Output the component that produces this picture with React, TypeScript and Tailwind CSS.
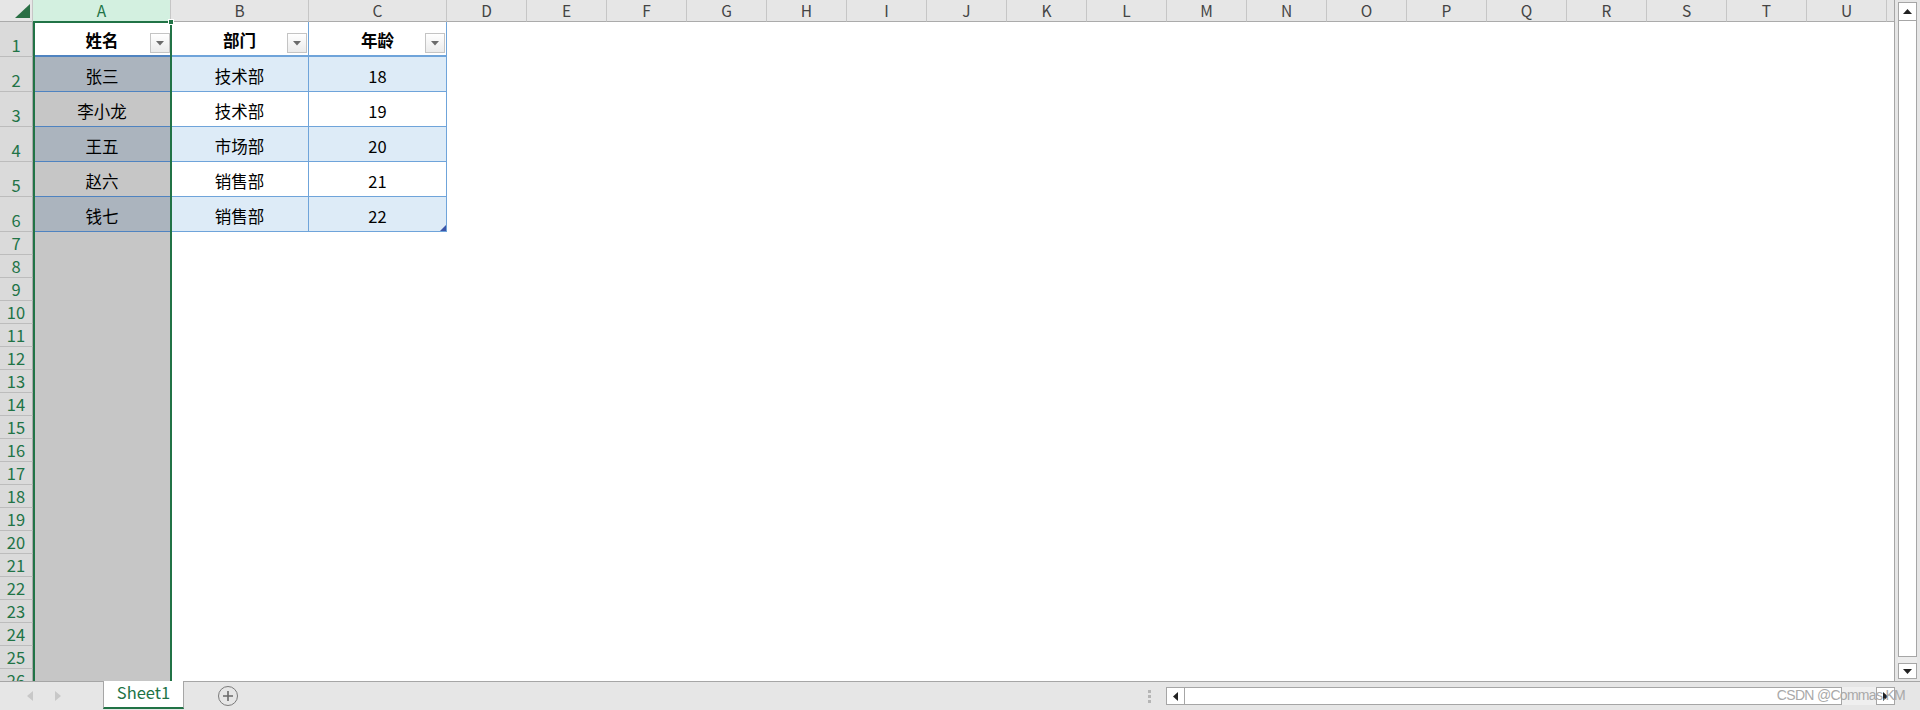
import React from "react";

const rows = [
  ["姓名", "部门", "年龄"],
  ["张三", "技术部", "18"],
  ["李小龙", "技术部", "19"],
  ["王五", "市场部", "20"],
  ["赵六", "销售部", "21"],
  ["钱七", "销售部", "22"],
];

const moreCols = ["D", "E", "F", "G", "H", "I", "J", "K", "L", "M", "N", "O", "P", "Q", "R", "S", "T", "U"];

const font = { fontFamily: '"Noto Sans CJK SC", "Liberation Sans", sans-serif' };

function FilterButton() {
  return (
    <div className="absolute right-[1px] bottom-[2px] w-[20px] h-[20px] border border-[#c4c4c4] bg-gradient-to-b from-white to-[#ebebeb] flex items-center justify-center">
      <svg width="8" height="5" viewBox="0 0 8 5">
        <path d="M0 0 L8 0 L4 4.5 Z" fill="#6b6b6b" />
      </svg>
    </div>
  );
}

function RowHeader({ n, h }: { n: number; h: string }) {
  return (
    <div
      className={`w-[33px] shrink-0 ${h} bg-[#dadada] border-r border-b border-r-[#a8a8a8] border-b-[#bcbcbc] flex items-end justify-center text-[16.5px] leading-[20px] text-[#217346] pb-[1px]`}
    >
      {n}
    </div>
  );
}

export default function App() {
  return (
    <div className="w-[1920px] h-[710px] bg-[#e6e6e6] flex flex-col overflow-hidden text-black" style={font}>
      <div className="flex h-[681px]">
        {/* sheet grid */}
        <div className="relative w-[1895px] h-[681px] overflow-hidden bg-white border-r border-[#a6a6a6] flex flex-col">
          {/* column headers */}
          <div className="flex h-[22px] shrink-0 bg-[#e6e6e6] text-[15.5px] text-[#444]">
            <div className="w-[33px] shrink-0 border-r border-b border-r-[#c6c6c6] border-b-[#ababab] flex items-end justify-end pr-[2px] pb-[3px]">
              <svg width="15" height="14" viewBox="0 0 15 14">
                <path d="M15 0 L15 14 L0 14 Z" fill="#2a6f45" />
              </svg>
            </div>
            <div className="w-[138px] shrink-0 bg-[#d3f0e0] text-[#217346] border-r border-b border-r-[#c6c6c6] border-b-[#217346] flex items-center justify-center pt-[1px]">
              A
            </div>
            {["B", "C"].map((c) => (
              <div key={c} className="w-[138px] shrink-0 border-r border-b border-r-[#c6c6c6] border-b-[#ababab] flex items-center justify-center pt-[1px]">
                {c}
              </div>
            ))}
            {moreCols.map((c) => (
              <div key={c} className="w-[80px] shrink-0 border-r border-b border-r-[#c6c6c6] border-b-[#ababab] flex items-center justify-center pt-[1px]">
                {c}
              </div>
            ))}
            <div className="flex-1 border-b border-b-[#ababab]" />
          </div>

          {/* table rows */}
          {rows.map((r, i) => {
            const head = i === 0;
            const band = i % 2 === 1;
            const last = i === rows.length - 1;
            const bottom = head ? "border-b-2" : "border-b";
            const aBg = head ? "bg-white" : band ? "bg-[#abb4be]" : "bg-[#c6c6c6]";
            const bcBg = head ? "bg-white" : band ? "bg-[#ddebf7]" : "bg-white";
            const weight = head ? "font-bold" : "";
            return (
              <div key={i} className="flex h-[35px] shrink-0">
                <RowHeader n={i + 1} h="h-[35px]" />
                <div className={`relative w-[138px] shrink-0 ${aBg} ${bottom} border-[#4f83c0] flex items-end justify-center pb-[5px] text-[16.5px] leading-[20px] ${weight}`}>
                  {r[0]}
                  {head && <FilterButton />}
                </div>
                <div className={`relative w-[138px] shrink-0 ${bcBg} ${bottom} border-r border-[#6fa4da] flex items-end justify-center pb-[5px] text-[16.5px] leading-[20px] ${weight}`}>
                  {r[1]}
                  {head && <FilterButton />}
                </div>
                <div className={`relative w-[138px] shrink-0 ${bcBg} ${bottom} border-r border-[#6fa4da] flex items-end justify-center pb-[5px] text-[16.5px] leading-[20px] ${weight}`}>
                  {r[2]}
                  {head && <FilterButton />}
                  {last && (
                    <svg className="absolute right-0 bottom-0" width="6" height="6" viewBox="0 0 6 6">
                      <path d="M6 0 L6 6 L0 6 Z" fill="#3b55a8" />
                    </svg>
                  )}
                </div>
                <div className="flex-1" />
              </div>
            );
          })}

          {/* empty rows */}
          {Array.from({ length: 20 }, (_, k) => k + 7).map((n) => (
            <div key={n} className="flex h-[23px] shrink-0">
              <RowHeader n={n} h="h-[23px]" />
              <div className="w-[138px] shrink-0 bg-[#c6c6c6]" />
              <div className="flex-1" />
            </div>
          ))}

          {/* column A selection outline */}
          <div className="absolute left-[33px] top-[21px] w-[139px] h-[700px] border-2 border-[#217346]" />
          <div className="absolute left-[168px] top-[19px] w-[6px] h-[6px] bg-[#217346] border border-white" />
        </div>

        {/* vertical scrollbar */}
        <div className="w-[25px] flex flex-col pl-[3px] pr-[3px] pt-[2px] pb-[2px]">
          <div className="h-[19px] bg-white border border-[#a6a6a6] flex items-center justify-center">
            <svg width="9" height="5" viewBox="0 0 9 5">
              <path d="M4.5 0 L9 5 L0 5 Z" fill="#222" />
            </svg>
          </div>
          <div className="h-[636px] bg-white border border-t-0 border-[#a6a6a6]" />
          <div className="flex-1 bg-[#ececec]" />
          <div className="h-[16px] bg-white border border-[#a6a6a6] flex items-center justify-center">
            <svg width="9" height="5" viewBox="0 0 9 5">
              <path d="M0 0 L9 0 L4.5 5 Z" fill="#222" />
            </svg>
          </div>
        </div>
      </div>

      {/* sheet tabs + horizontal scrollbar */}
      <div className="relative flex h-[29px]">
        <div className="w-[103px] shrink-0 border-t border-[#a6a6a6] flex items-center gap-[22px] pl-[27px]">
          <svg width="6" height="10" viewBox="0 0 6 10">
            <path d="M6 0 L6 10 L0 5 Z" fill="#c8c8c8" />
          </svg>
          <svg width="6" height="10" viewBox="0 0 6 10">
            <path d="M0 0 L6 5 L0 10 Z" fill="#c8c8c8" />
          </svg>
        </div>
        <div className="w-[81px] h-[28px] shrink-0 bg-white border-x border-[#a6a6a6] border-b-2 border-b-[#217346] flex items-center justify-center pb-[3px] text-[16.5px] text-[#217346]">
          Sheet1
        </div>
        <div className="flex-1 border-t border-[#a6a6a6] flex items-center">
          <div className="ml-[34px] w-[20px] h-[20px] rounded-full border-[1.5px] border-[#7a7a7a] flex items-center justify-center">
            <svg width="12" height="12" viewBox="0 0 12 12">
              <path d="M6 1 V11 M1 6 H11" stroke="#6a6a6a" strokeWidth="1.6" />
            </svg>
          </div>
          <div className="ml-auto flex items-center pr-[25px]">
            <div className="flex flex-col gap-[2px] mr-[15px]">
              <div className="w-[3px] h-[3px] bg-[#b5b5b5]" />
              <div className="w-[3px] h-[3px] bg-[#b5b5b5]" />
              <div className="w-[3px] h-[3px] bg-[#b5b5b5]" />
            </div>
            <div className="w-[19px] h-[18px] bg-white border border-[#a6a6a6] flex items-center justify-center">
              <svg width="5" height="9" viewBox="0 0 5 9">
                <path d="M5 0 L5 9 L0 4.5 Z" fill="#222" />
              </svg>
            </div>
            <div className="w-[657px] h-[18px] bg-white border border-l-0 border-[#a6a6a6]" />
            <div className="w-[34px] h-[18px] bg-[#efefef]" />
            <div className="w-[19px] h-[18px] bg-white border border-[#a6a6a6] flex items-center justify-center">
              <svg width="5" height="9" viewBox="0 0 5 9">
                <path d="M0 0 L5 4.5 L0 9 Z" fill="#222" />
              </svg>
            </div>
          </div>
        </div>
        <div
          className="absolute right-[15px] top-[5px] text-[14px] leading-[18px] tracking-[-0.7px] text-[#a9a9a9]"
          style={{ fontFamily: '"Liberation Sans", Arial, sans-serif' }}
        >
          CSDN @Commas.KM
        </div>
      </div>
    </div>
  );
}
